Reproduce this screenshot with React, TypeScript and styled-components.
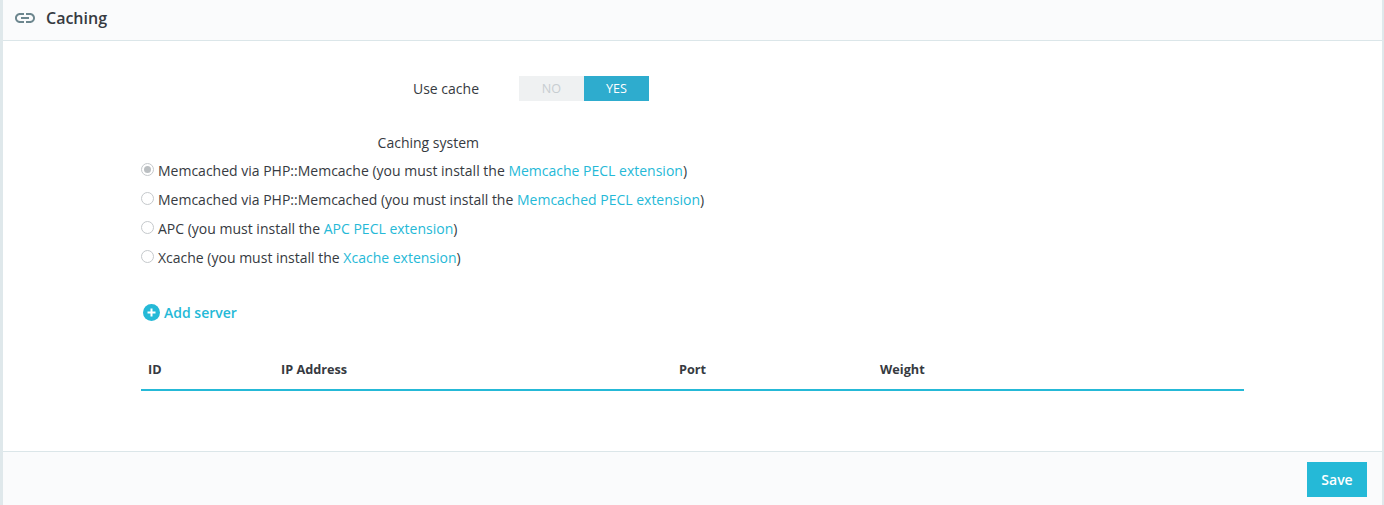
// App.tsx

import React, { FunctionComponent } from 'react';
import styled, { createGlobalStyle } from 'styled-components';

const GlobalStyle = createGlobalStyle`
  html, body {
    margin: 0;
    padding: 0;
    background: #fff;
    font-family: "Open Sans", "Liberation Sans", sans-serif;
    font-size: 14px;
    color: #363a41;
  }
`;

const Panel = styled.div`
  box-sizing: border-box;
  width: 1384px;
  height: 505px;
  display: flex;
  flex-direction: column;
  background: #fff;
  border-left: 3px solid #dfe8eb;
  border-right: 2px solid #dfe8eb;
`;

const Header = styled.div`
  box-sizing: border-box;
  height: 41px;
  display: flex;
  align-items: center;
  gap: 9px;
  padding: 0 0 4px 10px;
  background: #fafbfc;
  border-bottom: 1px solid #dbe6e9;
  font-size: 16px;
  font-weight: 600;
`;

const HeaderIcon = styled.svg`
  width: 24px;
  height: 24px;
  fill: #6c868e;
`;

const Body = styled.div`
  flex: 1;
  padding: 35px 0 0 138px;
`;

const Row = styled.div`
  display: flex;
  align-items: center;
  gap: 40px;
  height: 25px;
`;

const Label = styled.div`
  width: 338px;
  text-align: right;
  line-height: 20px;
`;

const SystemLabel = styled(Label)`
  margin-top: 32px;
  height: 20px;
`;

const Switch = styled.div`
  display: flex;
  height: 25px;
  width: 130px;
`;

const SwitchOption = styled.div<{ $active: boolean }>`
  flex: 1;
  display: flex;
  align-items: center;
  justify-content: center;
  font-size: 12.6px;
  background: ${props => (props.$active ? '#2eacce' : '#eff1f2')};
  color: ${props => (props.$active ? '#fff' : '#c7cdd1')};
`;

const RadioList = styled.div`
  display: flex;
  flex-direction: column;
  margin-top: 3px;
`;

const RadioRow = styled.label`
  display: flex;
  align-items: center;
  gap: 4px;
  height: 29px;
  line-height: 20px;
`;

const RadioMark = styled.span<{ $checked: boolean }>`
  box-sizing: border-box;
  width: 13px;
  height: 13px;
  margin-top: -2px;
  border-radius: 50%;
  border: 1px solid #c5c9cc;
  background: #fff;
  display: flex;
  align-items: center;
  justify-content: center;

  &::after {
    content: '';
    width: 7px;
    height: 7px;
    border-radius: 50%;
    background: ${props => (props.$checked ? '#bbbfc2' : 'transparent')};
  }
`;

const Link = styled.a`
  color: #25b9d7;
  text-decoration: none;
`;

const AddServer = styled.a`
  display: flex;
  align-items: center;
  gap: 4px;
  width: max-content;
  margin: 28px 0 0 2px;
  height: 24px;
  color: #25b9d7;
  font-weight: 600;
`;

const ServersTable = styled.table`
  width: 1103px;
  margin-top: 20px;
  border-collapse: collapse;
  table-layout: fixed;
`;

const HeadCell = styled.th<{ $width: number }>`
  box-sizing: border-box;
  width: ${props => props.$width}px;
  height: 46px;
  padding: 4px 7px 0;
  text-align: left;
  font-size: 12.7px;
  font-weight: 700;
  border-bottom: 2px solid #25b9d7;
`;

const Footer = styled.div`
  box-sizing: border-box;
  height: 54px;
  display: flex;
  justify-content: flex-end;
  padding: 10px 15px 0 0;
  background: #fafbfc;
  border-top: 1px solid #dbe6e9;
`;

const SaveButton = styled.button`
  width: 60px;
  height: 35px;
  border: 0;
  padding: 0;
  background: #25b9d7;
  color: #fff;
  font-family: inherit;
  font-size: 14px;
  font-weight: 600;
`;

const systems = [
  { name: 'Memcached via PHP::Memcache', link: 'Memcache PECL extension', checked: true },
  { name: 'Memcached via PHP::Memcached', link: 'Memcached PECL extension', checked: false },
  { name: 'APC', link: 'APC PECL extension', checked: false },
  { name: 'Xcache', link: 'Xcache extension', checked: false },
];

const columns = [
  { title: 'ID', width: 133 },
  { title: 'IP Address', width: 398 },
  { title: 'Port', width: 201 },
  { title: 'Weight', width: 371 },
];

const App: FunctionComponent = () => {
  return (
    <>
      <GlobalStyle />
      <Panel>
        <Header>
          <HeaderIcon viewBox="0 0 24 24">
            <path d="M3.9 12c0-1.71 1.39-3.1 3.1-3.1h4V7H7c-2.76 0-5 2.24-5 5s2.24 5 5 5h4v-1.9H7c-1.71 0-3.1-1.39-3.1-3.1zM8 13h8v-2H8v2zm9-6h-4v1.9h4c1.71 0 3.1 1.39 3.1 3.1s-1.39 3.1-3.1 3.1h-4V17h4c2.76 0 5-2.24 5-5s-2.24-5-5-5z" />
          </HeaderIcon>
          Caching
        </Header>
        <Body>
          <Row>
            <Label>Use cache</Label>
            <Switch>
              <SwitchOption $active={false}>NO</SwitchOption>
              <SwitchOption $active>YES</SwitchOption>
            </Switch>
          </Row>
          <SystemLabel>Caching system</SystemLabel>
          <RadioList>
            {systems.map(system => (
              <RadioRow key={system.name}>
                <RadioMark $checked={system.checked} />
                <span>
                  {system.name} (you must install the <Link>{system.link}</Link>)
                </span>
              </RadioRow>
            ))}
          </RadioList>
          <AddServer>
            <svg width="17" height="17" viewBox="0 0 17 17">
              <circle cx="8.5" cy="8.5" r="8.5" fill="#25b9d7" />
              <path d="M8.5 4.5v8M4.5 8.5h8" stroke="#fff" strokeWidth="2" />
            </svg>
            Add server
          </AddServer>
          <ServersTable>
            <thead>
              <tr>
                {columns.map(column => (
                  <HeadCell key={column.title} $width={column.width}>
                    {column.title}
                  </HeadCell>
                ))}
              </tr>
            </thead>
          </ServersTable>
        </Body>
        <Footer>
          <SaveButton>Save</SaveButton>
        </Footer>
      </Panel>
    </>
  );
};

export default App;
